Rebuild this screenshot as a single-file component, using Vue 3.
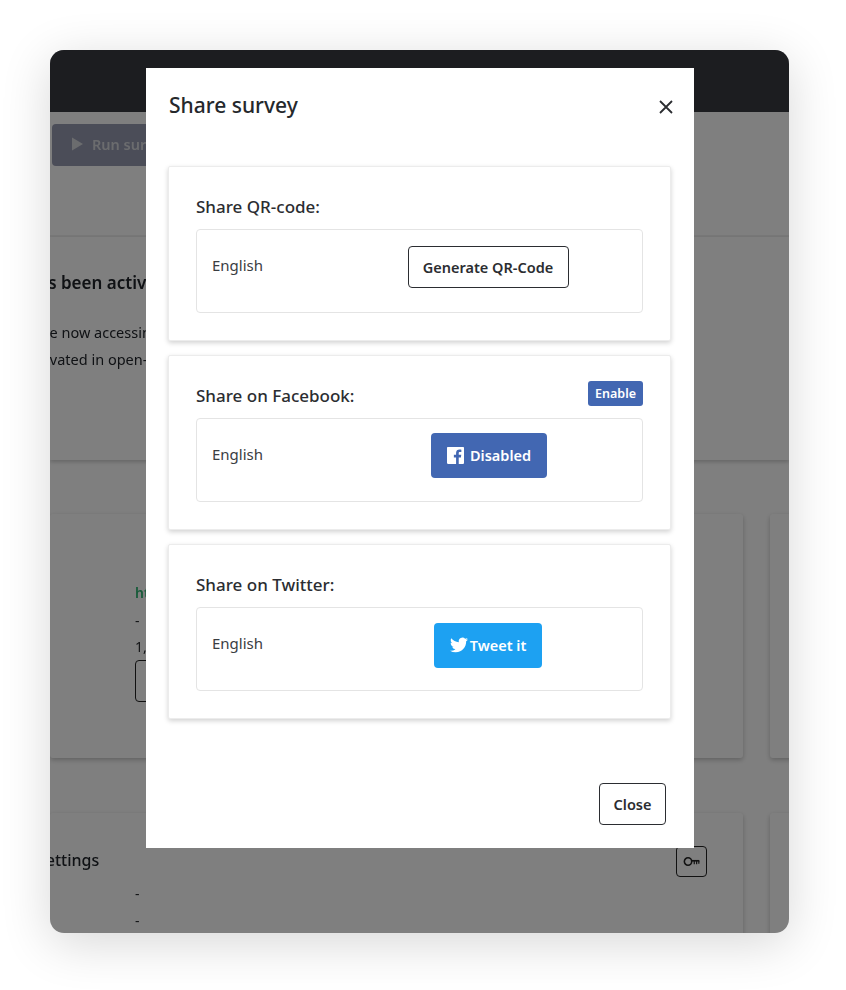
<script setup>
const cards = [
  { id: 'qr', title: 'Share QR-code:' },
  { id: 'fb', title: 'Share on Facebook:' },
  { id: 'tw', title: 'Share on Twitter:' }
]
</script>

<template>
  <div class="stage">
    <div class="window">
      <div class="page">
        <header class="topbar"></header>
        <section class="toolbar">
          <button class="run">
            <svg class="play" viewBox="0 0 12 14"><path d="M0 0l12 7-12 7z" /></svg>
            <span>Run survey</span>
          </button>
        </section>
        <section class="notice">
          <h3>This survey has been activated</h3>
          <p>Your participants are now accessing it</p>
          <p>The survey is activated in open-access mode</p>
        </section>
        <div class="row first">
          <div class="pcard">
            <a class="link">https://survey.link</a>
            <span class="dash">-</span>
            <span class="num">1,000</span>
            <span class="ghost"></span>
          </div>
          <div class="pcard"></div>
        </div>
        <div class="row second">
          <div class="pcard">
            <div class="set-head">
              <h4>Settings</h4>
              <span class="key">
                <svg viewBox="0 0 18 12" fill="none" stroke="currentColor" stroke-width="1.7">
                  <circle cx="5.2" cy="6" r="4" />
                  <path d="M9 5.2h8.6" stroke-width="1.8" />
                  <path d="M12 5.5v3.6M14.6 5.5v3.6M17 5.5v3" stroke-width="1.3" />
                </svg>
              </span>
            </div>
            <span class="dash a">-</span>
            <span class="dash b">-</span>
          </div>
          <div class="pcard"></div>
        </div>
      </div>

      <div class="overlay"></div>

      <div class="modal">
        <div class="m-head">
          <h2>Share survey</h2>
          <svg class="x" viewBox="0 0 14 14" fill="none" stroke="currentColor" stroke-width="1.8">
            <path d="M1 1l12 12M13 1L1 13" />
          </svg>
        </div>

        <div class="m-body">
          <div v-for="c in cards" :key="c.id" class="card">
            <div class="c-title">
              <h5>{{ c.title }}</h5>
              <span v-if="c.id === 'fb'" class="enable">Enable</span>
            </div>
            <div class="inner">
              <span class="lang">English</span>
              <div class="cell">
                <button v-if="c.id === 'qr'" class="btn outline qr">Generate QR-Code</button>
                <button v-else-if="c.id === 'fb'" class="btn fb">
                  <svg viewBox="0 0 24 24"><path fill="currentColor" d="M22.675 0H1.325C.593 0 0 .593 0 1.325v21.351C0 23.407.593 24 1.325 24H12.82v-9.294H9.692v-3.622h3.128V8.413c0-3.1 1.893-4.788 4.659-4.788 1.325 0 2.463.099 2.795.143v3.24l-1.918.001c-1.504 0-1.795.715-1.795 1.763v2.313h3.587l-.467 3.622h-3.12V24h6.116c.73 0 1.323-.593 1.323-1.325V1.325C24 .593 23.407 0 22.675 0z" /></svg>
                  Disabled
                </button>
                <button v-else class="btn tw">
                  <svg viewBox="0 0 24 24"><path fill="currentColor" d="M23.953 4.57a10 10 0 01-2.825.775 4.958 4.958 0 002.163-2.723c-.951.555-2.005.959-3.127 1.184a4.92 4.92 0 00-8.384 4.482C7.69 8.095 4.067 6.13 1.64 3.162a4.822 4.822 0 00-.666 2.475c0 1.71.87 3.213 2.188 4.096a4.904 4.904 0 01-2.228-.616v.06a4.923 4.923 0 003.946 4.827 4.996 4.996 0 01-2.212.085 4.936 4.936 0 004.604 3.417 9.867 9.867 0 01-6.102 2.105c-.39 0-.779-.023-1.17-.067a13.995 13.995 0 007.557 2.209c9.053 0 13.998-7.496 13.998-13.985 0-.21 0-.42-.015-.63A9.935 9.935 0 0024 4.59z" /></svg>
                  Tweet it
                </button>
              </div>
            </div>
          </div>
        </div>

        <div class="m-foot">
          <button class="btn outline close">Close</button>
        </div>
      </div>
    </div>
  </div>
</template>

<style>
html, body { margin: 0; background: #fff; }
</style>

<style scoped>
* { box-sizing: border-box; }
.stage {
  width: 846px;
  height: 990px;
  padding: 50px 57px 57px 50px;
  font-family: "Noto Sans", "Liberation Sans", sans-serif;
  color: #2b2d31;
  overflow: hidden;
}
.window {
  position: relative;
  width: 739px;
  height: 883px;
  border-radius: 14px;
  overflow: hidden;
  box-shadow: 0 10px 50px rgba(0, 0, 0, .16);
}
.page {
  height: 100%;
  display: flex;
  flex-direction: column;
  background: #fff;
  overflow: hidden;
  filter: blur(.4px);
}
.topbar { flex: none; height: 62px; background: #383a40; }
.toolbar {
  flex: none;
  height: 125px;
  padding: 12px 0 0 2px;
  border-bottom: 2px solid #f0f0f0;
}
.run {
  display: flex;
  align-items: center;
  gap: 9px;
  width: 200px;
  height: 42px;
  padding: 0 0 2px 20px;
  border: 0;
  border-radius: 4px;
  background: #969ab0;
  color: #d6d8dd;
  font: 600 14.5px "Noto Sans", sans-serif;
  white-space: nowrap;
}
.play { width: 11px; height: 14px; fill: currentColor; }
.notice {
  flex: none;
  height: 223px;
  padding-top: 34px;
  box-shadow: 0 2px 4px rgba(0, 0, 0, .2);
  white-space: nowrap;
}
.notice h3 {
  margin: 0 0 24px -120px;
  font-size: 17px;
  line-height: 24px;
  font-weight: 600;
  color: #20242a;
}
.notice p {
  margin: 0;
  font-size: 14.5px;
  line-height: 27px;
  color: #20242a;
}
.notice p:nth-of-type(1) { margin-left: -134px; }
.notice p:nth-of-type(2) { margin-left: -116px; }
.row {
  flex: none;
  display: grid;
  grid-template-columns: 693px 300px;
  gap: 27px;
}
.row.first { margin-top: 54px; height: 244px; }
.row.second { margin-top: 55px; height: 200px; }
.pcard {
  position: relative;
  display: flex;
  flex-direction: column;
  align-items: flex-start;
  padding-left: 85px;
  background: #fff;
  border-radius: 3px;
  box-shadow: 0 2px 5px rgba(0, 0, 0, .24);
  font-size: 14px;
}
.link {
  margin-top: 69px;
  font-weight: 600;
  line-height: 20px;
  color: #2fb673;
}
.dash { line-height: 20px; margin-top: 8px; font-size: 14px; }
.num { line-height: 20px; margin-top: 6px; }
.ghost {
  width: 100px;
  height: 42px;
  margin-top: 3px;
  border: 1.5px solid #222;
  border-radius: 4px;
}
.set-head {
  display: flex;
  justify-content: space-between;
  align-items: center;
  align-self: stretch;
  margin: 33px 36px 0 -98px;
}
.set-head h4 {
  margin: 0 0 4px;
  font-size: 16px;
  font-weight: 500;
  color: #20242a;
}
.key {
  display: flex;
  align-items: center;
  justify-content: center;
  width: 31px;
  height: 31px;
  border: 1.5px solid #222;
  border-radius: 4px;
  color: #222;
}
.key svg { width: 17px; height: 11px; }
.dash.a { margin-top: 7px; }
.dash.b { margin-top: 7px; }

.overlay {
  position: absolute;
  inset: 0;
  background: rgba(0, 0, 0, .5);
}

.modal {
  position: absolute;
  left: 96px;
  top: 18px;
  width: 548px;
  height: 780px;
  display: flex;
  flex-direction: column;
  background: #fff;
}
.m-head {
  display: flex;
  justify-content: space-between;
  align-items: flex-start;
  padding: 22px 21px 0 23px;
  height: 98px;
}
.m-head h2 {
  margin: 0;
  font-size: 21px;
  line-height: 30px;
  font-weight: 500;
  color: #25282c;
}
.x { width: 14px; height: 14px; margin-top: 10px; color: #2b2d31; }
.m-body {
  display: flex;
  flex-direction: column;
  gap: 14px;
  padding: 0 23px 0 22px;
}
.card {
  height: 175px;
  padding: 28px 27px 0 27px;
  background: #fff;
  border: 1px solid #ececec;
  border-radius: 2px;
  box-shadow: 0 2px 5px rgba(0, 0, 0, .18);
}
.c-title {
  display: flex;
  justify-content: space-between;
  align-items: flex-end;
  height: 34px;
  padding-bottom: 10px;
}
.c-title h5 {
  margin: 0;
  font-size: 17px;
  line-height: 24px;
  font-weight: 500;
  color: #2b2d31;
}
.enable {
  margin-bottom: 2px;
  padding: 0 7px;
  height: 25px;
  line-height: 25px;
  border-radius: 3px;
  background: #4267b2;
  color: #fff;
  font-size: 12.5px;
  font-weight: 600;
}
.inner {
  display: grid;
  grid-template-columns: 166px 220px;
  align-items: center;
  height: 84px;
  padding: 0 0 12px 15px;
  border: 1px solid #e4e4e4;
  border-radius: 4px;
}
.lang { font-size: 15px; color: #3a3d42; }
.cell { display: flex; justify-content: center; margin-bottom: -4px; }
.btn {
  display: inline-flex;
  align-items: center;
  justify-content: center;
  border-radius: 4px;
  font: 600 14.5px "Noto Sans", sans-serif;
  white-space: nowrap;
}
.outline { background: #fff; border: 1.5px solid #2b2d31; color: #2b2d31; }
.qr { width: 161px; height: 42px; }
.fb {
  gap: 6px;
  width: 116px;
  height: 45px;
  margin: -2px 0 0 2px;
  border: 0;
  background: #4267b2;
  color: #fff;
}
.fb svg { width: 17px; height: 17px; }
.tw {
  gap: 2px;
  width: 108px;
  height: 45px;
  border: 0;
  background: #1da1f2;
  color: #fff;
}
.tw svg { width: 18px; height: 18px; }
.m-foot {
  display: flex;
  justify-content: flex-end;
  margin-top: auto;
  padding: 0 28px 23px 0;
}
.close { width: 67px; height: 42px; }
</style>
